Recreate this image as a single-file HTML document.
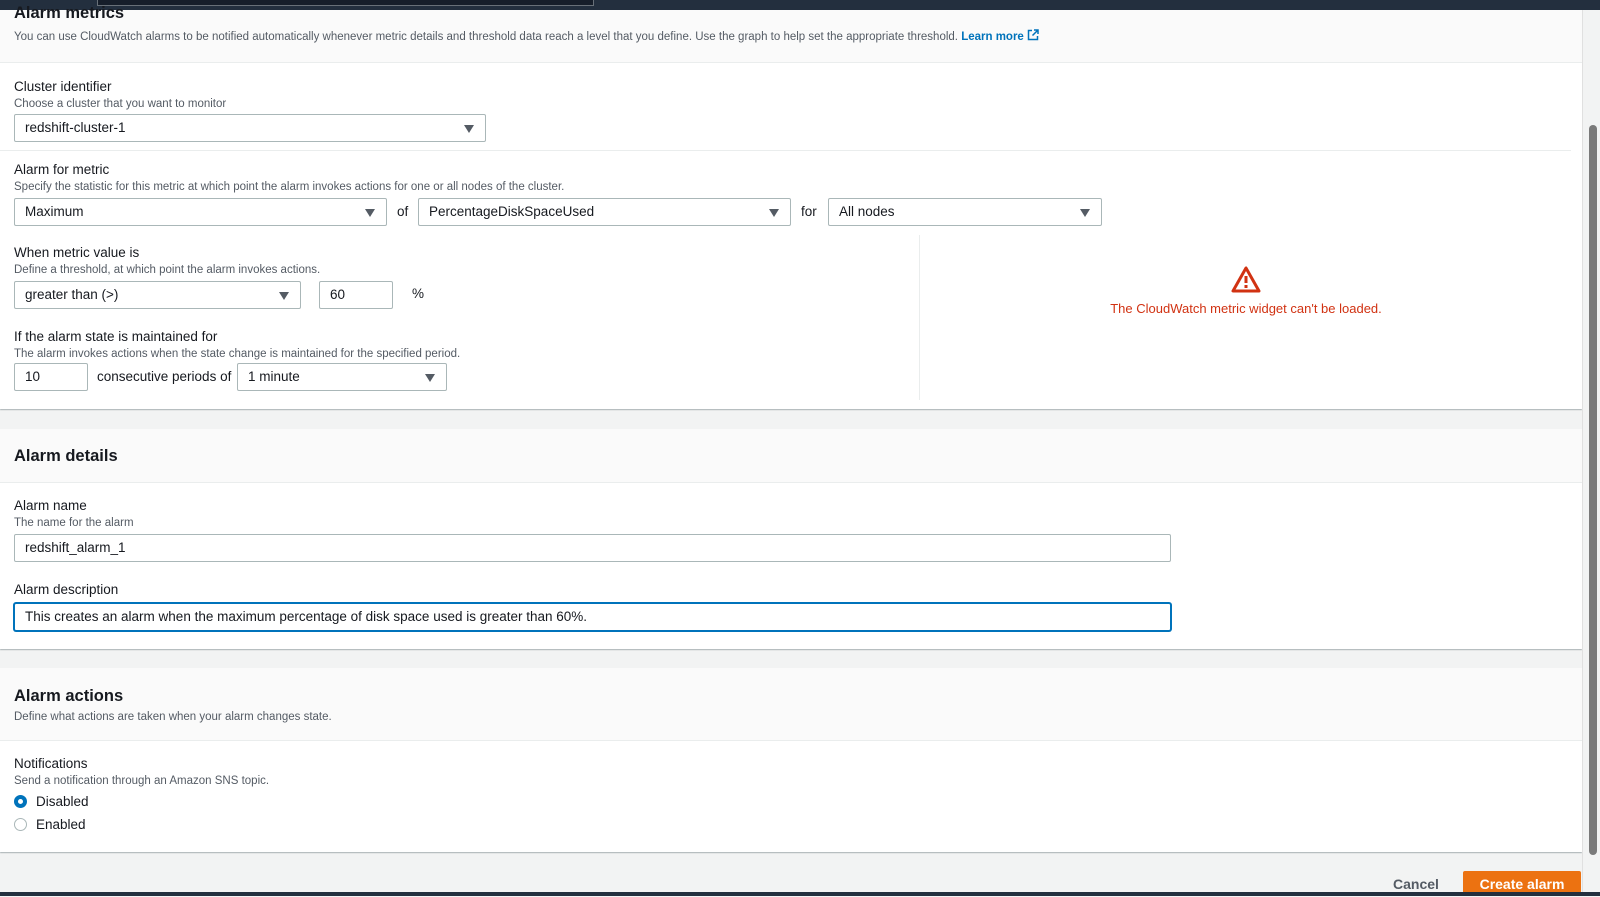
<!DOCTYPE html>
<html><head><meta charset="utf-8"><style>
*{box-sizing:border-box;margin:0;padding:0}
body{width:1600px;height:896px;overflow:hidden;background:#f2f3f3;font-family:"Liberation Sans",sans-serif;color:#16191f;position:relative}
.a{position:absolute;white-space:nowrap}
.topbar{position:absolute;left:0;top:0;width:1600px;height:10px;background:#232f3e}
.topbox{position:absolute;left:97px;top:0;width:497px;height:6px;background:#161e2a;border:1px solid #687078;border-top:none}
.panel{position:absolute;left:0;width:1582px;background:#fff;box-shadow:0 1px 1px rgba(0,28,36,.3)}
.hdr{position:absolute;left:0;top:0;width:100%;background:#fafafa;border-bottom:1px solid #eaeded}
.lbl{font-size:13.5px;color:#16191f}
.desc{font-size:11.5px;color:#545b64;margin-top:2px}
.sel,.inp{position:absolute;height:28px;border:1px solid #aab7b8;border-radius:2px;background:#fff;font-size:13.5px;padding-left:10px;line-height:26px}
.sel::after{content:"";position:absolute;right:11px;top:10px;border-left:5.5px solid transparent;border-right:5.5px solid transparent;border-top:8px solid #545b64}
.h2{font-size:16.5px;font-weight:bold}
.radio{position:absolute;width:13px;height:13px;border-radius:50%;border:1px solid #aab7b8}
.radio.on{border:4px solid #0073bb}
</style></head><body>
<div class="topbar"></div><div class="topbox"></div>

<div class="panel" style="top:10px;height:399px">
 <div class="hdr" style="height:53px"></div>
 <div class="a h2" style="left:14px;top:-6px">Alarm metrics</div>
 <div class="a desc" style="left:14px;top:17px">You can use CloudWatch alarms to be notified automatically whenever metric details and threshold data reach a level that you define. Use the graph to help set the appropriate threshold. <b style="color:#0073bb">Learn more</b> <svg width="12" height="12" viewBox="0 0 12 12" style="vertical-align:-1px"><path d="M5 1.5H1.5v9h9V7M7 1h4v4M11 1 5.5 6.5" fill="none" stroke="#0073bb" stroke-width="1.5"/></svg></div>

 <div class="a lbl" style="left:14px;top:69px">Cluster identifier</div>
 <div class="a desc" style="left:14px;top:86px">Choose a cluster that you want to monitor</div>
 <div class="sel" style="left:14px;top:104px;width:472px">redshift-cluster-1</div>
 <div class="a" style="left:0;top:140px;width:1571px;height:1px;background:#eaeded"></div>

 <div class="a lbl" style="left:14px;top:152px">Alarm for metric</div>
 <div class="a desc" style="left:14px;top:169px">Specify the statistic for this metric at which point the alarm invokes actions for one or all nodes of the cluster.</div>
 <div class="sel" style="left:14px;top:188px;width:373px">Maximum</div>
 <div class="a lbl" style="left:397px;top:194px">of</div>
 <div class="sel" style="left:418px;top:188px;width:373px">PercentageDiskSpaceUsed</div>
 <div class="a lbl" style="left:801px;top:194px">for</div>
 <div class="sel" style="left:828px;top:188px;width:274px">All nodes</div>

 <div class="a" style="left:919px;top:225px;width:1px;height:165px;background:#eaeded"></div>
 <svg class="a" style="left:1231px;top:256px" width="30" height="28" viewBox="0 0 30 28"><path d="M15 2 2 25h26z" fill="none" stroke="#d13212" stroke-width="3" stroke-linejoin="round"/><rect x="13.5" y="10" width="3" height="7" fill="#d13212"/><rect x="13.5" y="19" width="3" height="3" fill="#d13212"/></svg>
 <div class="a" style="left:1246px;top:291px;transform:translateX(-50%);font-size:13px;color:#d13212">The CloudWatch metric widget can't be loaded.</div>

 <div class="a lbl" style="left:14px;top:235px">When metric value is</div>
 <div class="a desc" style="left:14px;top:252px">Define a threshold, at which point the alarm invokes actions.</div>
 <div class="sel" style="left:14px;top:271px;width:287px">greater than (&gt;)</div>
 <div class="inp" style="left:319px;top:271px;width:74px">60</div>
 <div class="a lbl" style="left:412px;top:276px">%</div>

 <div class="a lbl" style="left:14px;top:319px">If the alarm state is maintained for</div>
 <div class="a desc" style="left:14px;top:336px">The alarm invokes actions when the state change is maintained for the specified period.</div>
 <div class="inp" style="left:14px;top:353px;width:74px">10</div>
 <div class="a lbl" style="left:97px;top:359px">consecutive periods of</div>
 <div class="sel" style="left:237px;top:353px;width:210px">1 minute</div>
</div>

<div class="panel" style="top:429px;height:220px">
 <div class="hdr" style="height:54px"></div>
 <div class="a h2" style="left:14px;top:18px">Alarm details</div>
 <div class="a lbl" style="left:14px;top:69px">Alarm name</div>
 <div class="a desc" style="left:14px;top:86px">The name for the alarm</div>
 <div class="inp" style="left:14px;top:105px;width:1157px">redshift_alarm_1</div>
 <div class="a lbl" style="left:14px;top:153px">Alarm description</div>
 <div class="inp" style="left:14px;top:174px;width:1157px;border:1px solid #0073bb;box-shadow:0 0 0 1px #0073bb">This creates an alarm when the maximum percentage of disk space used is greater than 60%.</div>
</div>

<div class="panel" style="top:668px;height:184px">
 <div class="hdr" style="height:73px"></div>
 <div class="a h2" style="left:14px;top:19px">Alarm actions</div>
 <div class="a desc" style="left:14px;top:41px">Define what actions are taken when your alarm changes state.</div>
 <div class="a lbl" style="left:14px;top:88px">Notifications</div>
 <div class="a desc" style="left:14px;top:105px">Send a notification through an Amazon SNS topic.</div>
 <div class="radio on" style="left:14px;top:127px"></div>
 <div class="a lbl" style="left:36px;top:126px">Disabled</div>
 <div class="radio" style="left:14px;top:150px"></div>
 <div class="a lbl" style="left:36px;top:149px">Enabled</div>
</div>

<div class="a" style="left:1393px;top:876px;font-size:14px;font-weight:bold;color:#545b64">Cancel</div>
<div class="a" style="left:1463px;top:871px;width:118px;height:25px;background:#ec7211;border-radius:2px;color:#fff;font-weight:bold;font-size:14px;text-align:center;line-height:26px">Create alarm</div>
<div class="a" style="left:0;top:892px;width:1600px;height:4px;background:#232f3e"></div>

<div class="a" style="left:1582px;top:10px;width:18px;height:882px;background:#f2f3f3;border-left:1px solid #e0e0e0"></div>
<div class="a" style="left:1589px;top:125px;width:8px;height:730px;background:#7a7a7a;border-radius:4px"></div>
</body></html>
